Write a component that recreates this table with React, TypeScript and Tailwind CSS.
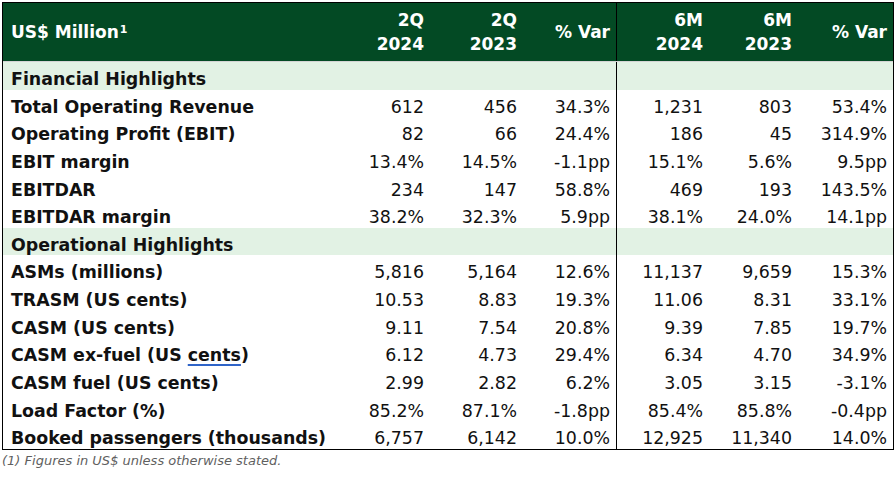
const font = { fontFamily: '"DejaVu Sans", "Liberation Sans", sans-serif' };

type Row =
  | { kind: "section"; label: string }
  | { kind: "data"; label: React.ReactNode; values: string[] };

const rows: Row[] = [
  { kind: "section", label: "Financial Highlights" },
  { kind: "data", label: "Total Operating Revenue", values: ["612", "456", "34.3%", "1,231", "803", "53.4%"] },
  { kind: "data", label: "Operating Profit (EBIT)", values: ["82", "66", "24.4%", "186", "45", "314.9%"] },
  { kind: "data", label: "EBIT margin", values: ["13.4%", "14.5%", "-1.1pp", "15.1%", "5.6%", "9.5pp"] },
  { kind: "data", label: "EBITDAR", values: ["234", "147", "58.8%", "469", "193", "143.5%"] },
  { kind: "data", label: "EBITDAR margin", values: ["38.2%", "32.3%", "5.9pp", "38.1%", "24.0%", "14.1pp"] },
  { kind: "section", label: "Operational Highlights" },
  { kind: "data", label: "ASMs (millions)", values: ["5,816", "5,164", "12.6%", "11,137", "9,659", "15.3%"] },
  { kind: "data", label: "TRASM (US cents)", values: ["10.53", "8.83", "19.3%", "11.06", "8.31", "33.1%"] },
  { kind: "data", label: "CASM (US cents)", values: ["9.11", "7.54", "20.8%", "9.39", "7.85", "19.7%"] },
  {
    kind: "data",
    label: (
      <>
        {"CASM ex-fuel (US\u00a0"}
        <span className="underline decoration-[#2f64c8] decoration-[1.5px] underline-offset-[3px]">cents</span>)
      </>
    ),
    values: ["6.12", "4.73", "29.4%", "6.34", "4.70", "34.9%"],
  },
  { kind: "data", label: "CASM fuel (US cents)", values: ["2.99", "2.82", "6.2%", "3.05", "3.15", "-3.1%"] },
  { kind: "data", label: "Load Factor (%)", values: ["85.2%", "87.1%", "-1.8pp", "85.4%", "85.8%", "-0.4pp"] },
  { kind: "data", label: "Booked passengers (thousands)", values: ["6,757", "6,142", "10.0%", "12,925", "11,340", "14.0%"] },
];

const cols = "grid grid-cols-[334px_93px_93px_93px_93px_89px_95px]";

export default function App() {
  return (
    <div className="h-[481px] w-[895px] bg-white pl-[2px] pt-[2px]" style={font}>
      <div className="w-[892px] border border-black">
        <div className={`${cols} h-[59px] border-b border-[#d4d4d4] bg-[#034a24] text-[17px] font-bold leading-[24px] text-white`}>
          <div className="flex items-center pl-[8px]">
            US$ Million<span className="ml-[1px] -translate-y-[3px] text-[11px] leading-none">1</span>
          </div>
          <div className="flex flex-col items-end justify-center pr-[6px]">
            <span>2Q</span>
            <span>2024</span>
          </div>
          <div className="flex flex-col items-end justify-center pr-[6px]">
            <span>2Q</span>
            <span>2023</span>
          </div>
          <div className="flex items-center justify-end pr-[6px]">% Var</div>
          <div className="flex flex-col items-end justify-center border-l border-black pr-[6px]">
            <span>6M</span>
            <span>2024</span>
          </div>
          <div className="flex flex-col items-end justify-center pr-[6px]">
            <span>6M</span>
            <span>2023</span>
          </div>
          <div className="flex items-center justify-end pr-[6px]">% Var</div>
        </div>
        {rows.map((row, i) =>
          row.kind === "section" ? (
            <div
              key={i}
              className={`${cols} h-[27.64px] overflow-hidden bg-[#e2f2e4] text-[17.4px] font-bold leading-[22px] text-[#111]`}
            >
              <div className="col-span-4 whitespace-nowrap pl-[8px] pt-[6px]">{row.label}</div>
              <div className="col-span-3 border-l border-black" />
            </div>
          ) : (
            <div key={i} className={`${cols} h-[27.64px] overflow-hidden text-[17.4px] leading-[22px] text-[#111]`}>
              <div className="whitespace-nowrap pl-[8px] pt-[6px] font-bold">{row.label}</div>
              {row.values.map((v, j) => (
                <div
                  key={j}
                  className={`whitespace-nowrap pr-[6px] pt-[6px] text-right ${j === 3 ? "border-l border-black" : ""}`}
                >
                  {v}
                </div>
              ))}
            </div>
          ),
        )}
      </div>
      <div className="mt-[1px] text-[13px] italic text-[#5f5f5f]">(1) Figures in US$ unless otherwise stated.</div>
    </div>
  );
}
